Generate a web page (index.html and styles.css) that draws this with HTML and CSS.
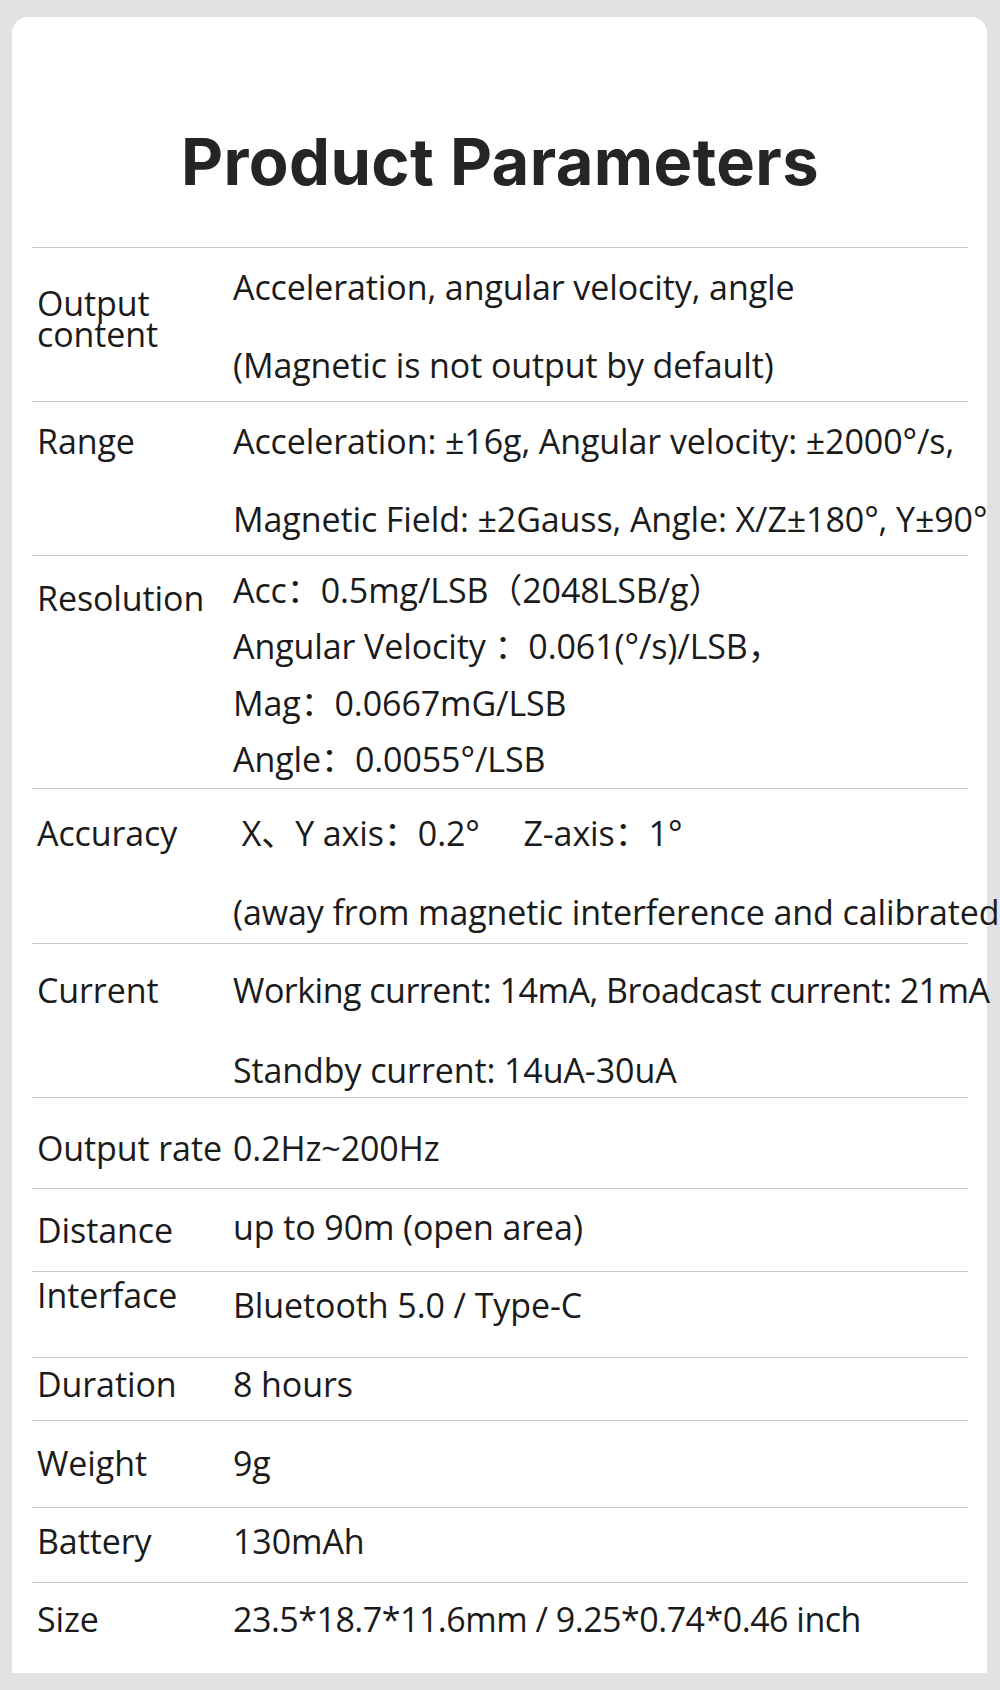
FILE: index.html
```html
<!DOCTYPE html>
<html lang="en">
<head>
<meta charset="utf-8">
<title>Product Parameters</title>
<link rel="stylesheet" href="styles.css">
</head>
<body>
<main class="card">
  <h1 class="title">Product Parameters</h1>
  <section class="table">
    <div class="row r-out">
      <div class="label">Output content</div>
      <div class="val">
        <div class="line">Acceleration, angular velocity, angle</div>
        <div class="line">(Magnetic is not output by default)</div>
      </div>
    </div>
    <div class="row r-range">
      <div class="label">Range</div>
      <div class="val">
        <div class="line">Acceleration: ±16g, Angular velocity: ±2000°/s,</div>
        <div class="line">Magnetic Field: ±2Gauss, Angle: X/Z±180°, Y±90°</div>
      </div>
    </div>
    <div class="row r-res">
      <div class="label">Resolution</div>
      <div class="val">
        <div class="line">Acc：0.5mg/LSB（2048LSB/g）</div>
        <div class="line">Angular Velocity ：0.061(°/s)/LSB，</div>
        <div class="line">Mag：0.0667mG/LSB</div>
        <div class="line">Angle：0.0055°/LSB</div>
      </div>
    </div>
    <div class="row r-acc">
      <div class="label">Accuracy</div>
      <div class="val">
        <div class="line">&nbsp;X、Y axis：0.2°&nbsp;&nbsp;&nbsp;&nbsp;&nbsp;Z-axis：1°</div>
        <div class="line">(away from magnetic interference and calibrated)</div>
      </div>
    </div>
    <div class="row r-cur">
      <div class="label">Current</div>
      <div class="val">
        <div class="line tight">Working current: 14mA, Broadcast current: 21mA</div>
        <div class="line">Standby current: 14uA-30uA</div>
      </div>
    </div>
    <div class="row single r-rate">
      <div class="label">Output rate</div>
      <div class="val"><div class="line">0.2Hz~200Hz</div></div>
    </div>
    <div class="row single r-dist">
      <div class="label">Distance</div>
      <div class="val"><div class="line">up to 90m (open area)</div></div>
    </div>
    <div class="row single r-if">
      <div class="label">Interface</div>
      <div class="val"><div class="line">Bluetooth 5.0 / Type-C</div></div>
    </div>
    <div class="row single r-dur">
      <div class="label">Duration</div>
      <div class="val"><div class="line">8 hours</div></div>
    </div>
    <div class="row single r-wt">
      <div class="label">Weight</div>
      <div class="val"><div class="line">9g</div></div>
    </div>
    <div class="row single r-bat">
      <div class="label">Battery</div>
      <div class="val"><div class="line">130mAh</div></div>
    </div>
    <div class="row single r-size">
      <div class="label">Size</div>
      <div class="val"><div class="line tight">23.5*18.7*11.6mm / 9.25*0.74*0.46 inch</div></div>
    </div>
  </section>
</main>
</body>
</html>
```
FILE: styles.css
```css
html, body {
  margin: 0;
  padding: 0;
  overflow: hidden;
}
body {
  background: #e2e2e2;
  width: 1000px;
  height: 1690px;
  padding-top: 17px;
  box-sizing: border-box;
  font-family: "Open Sans", "Noto Sans CJK SC", sans-serif;
  color: #1b1b1b;
}
.card {
  margin-left: 12px;
  width: 975px;
  height: 1656px;
  background: #ffffff;
  border-radius: 16px 16px 0 0;
  box-sizing: border-box;
  padding: 112px 19px 0 20px;
}
.title {
  margin: 0 0 53px 0;
  font-family: "Inter", "Open Sans", sans-serif;
  font-weight: 700;
  font-size: 65px;
  line-height: 65px;
  height: 65px;
  text-align: center;
  color: #252525;
  letter-spacing: 0.4px;
}
.table {
  display: flex;
  flex-direction: column;
}
.row {
  display: grid;
  grid-template-columns: 196px 1fr;
  padding-left: 5px;
  border-top: 1px solid #c6c6c6;
  box-sizing: border-box;
  font-size: 34px;
  letter-spacing: -0.1px;
  line-height: 78px;
}
.label {
  white-space: normal;
}
.val {
  white-space: nowrap;
}
.line {
  white-space: nowrap;
}
.line.tight {
  letter-spacing: -0.5px;
}

.r-out { height: 154px; }
.r-out .label { line-height: 31px; margin-top: 40px; }

.r-range { height: 154px; }

.r-res { height: 233px; padding-top: 6px; line-height: 56.3px; }
.r-res .label { margin-top: 8px; }

.r-acc { height: 155px; padding-top: 5px; line-height: 79px; }

.r-cur { height: 154px; padding-top: 6px; line-height: 80px; }

.single { line-height: 40px; }
.r-rate { height: 91px; padding-top: 30px; }
.r-dist { height: 83px; padding-top: 18px; }
.r-dist .label { margin-top: 3px; }
.r-if { height: 86px; padding-top: 3px; }
.r-if .val { margin-top: 10px; }
.r-dur { height: 63px; padding-top: 6px; }
.r-wt { height: 87px; padding-top: 22px; }
.r-bat { height: 75px; padding-top: 13px; }
.r-size { height: 91px; padding-top: 16px; }
```
